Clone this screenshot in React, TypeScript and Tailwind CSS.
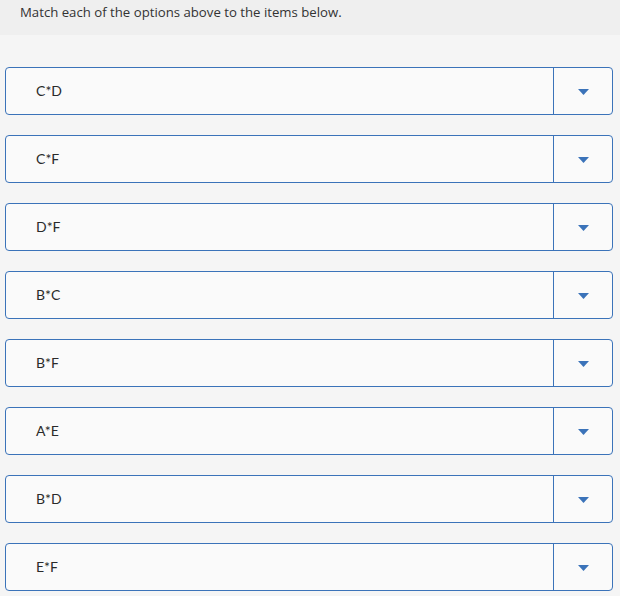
import React from "react";

const items = ["C*D", "C*F", "D*F", "B*C", "B*F", "A*E", "B*D", "E*F"];

export default function App() {
  return (
    <div className="w-[620px] h-[596px] bg-[#f5f5f5] overflow-hidden" style={{ fontFamily: "Lato, 'Open Sans', sans-serif" }}>
      <div
        className="h-[35px] bg-[#efefef] pl-[20px] pt-[3px] text-[13.2px] leading-[18px] text-[#333]"
        style={{ fontFamily: "'Open Sans', sans-serif" }}
      >
        Match each of the options above to the items below.
      </div>
      <div className="flex flex-col gap-[20px] pt-[32px] pl-[5px] pr-[7px]">
        {items.map((it) => (
          <div key={it} className="flex h-[48px] border border-[#3b73b9] rounded-[4px] bg-[#fafafa]">
            <div className="flex-1 flex items-center pl-[30px] pb-[2px] text-[14px] text-[#2a2a2a]">{it}</div>
            <div className="w-[59px] border-l border-[#3b73b9] flex items-center justify-center">
              <svg width="11" height="6" viewBox="0 0 11 6" className="mt-[2px]">
                <polygon points="0,0 11,0 5.5,6" fill="#3b73b9" />
              </svg>
            </div>
          </div>
        ))}
      </div>
    </div>
  );
}
